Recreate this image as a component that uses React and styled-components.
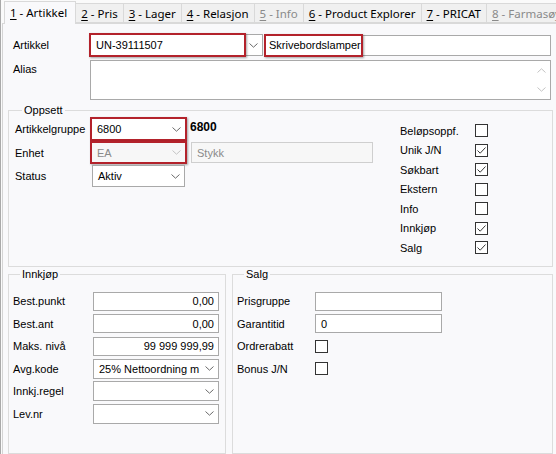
import React from 'react';
import styled, { createGlobalStyle } from 'styled-components';

const Global = createGlobalStyle`
  html, body { margin: 0; padding: 0; background: #f9f9fb; }
  body { font-family: "Liberation Sans", Arial, sans-serif; font-size: 11px; color: #000; }
  * { box-sizing: border-box; }
`;

const Window = styled.div`
  width: 556px;
  height: 454px;
  overflow: hidden;
  display: flex;
  flex-direction: column;
  background: #fafafa;
  border-left: 1px solid #a9a9a9;
`;

const TabStrip = styled.div`
  display: flex;
  align-items: flex-end;
  height: 23px;
  padding-left: 3px;
  flex-shrink: 0;
`;

const Tab = styled.div`
  position: relative;
  flex-shrink: 0;
  display: flex;
  align-items: center;
  white-space: nowrap;
  font-family: "Noto Sans", sans-serif;
  font-size: 11.5px;
  height: ${p => (p.$active ? 23 : 20)}px;
  padding: ${p => (p.$active ? '0 8px 2px 5px' : '0 5px 0 5px')};
  margin-bottom: ${p => (p.$active ? -1 : 0)}px;
  background: ${p => (p.$active ? '#f9f9fb' : '#f0f0f0')};
  border: 1px solid #d9d9d9;
  border-bottom: ${p => (p.$active ? 'none' : '1px solid #d9d9d9')};
  margin-left: ${p => (p.$first ? 0 : -1)}px;
  color: ${p => (p.$disabled ? '#8a8a8a' : '#000')};
  z-index: ${p => (p.$active ? 1 : 0)};
  u { text-decoration-thickness: 1px; text-underline-offset: 2px; }
`;

const Page = styled.div`
  flex: 1;
  border-top: 1px solid #d9d9d9;
  border-left: 1px solid #d4d4d4;
  margin-left: 1px;
  background: #f9f9fb;
  padding: 10px 3px 0 5px;
  display: flex;
  flex-direction: column;
`;

const TopRow = styled.div`
  display: flex;
  align-items: ${p => (p.$top ? 'flex-start' : 'center')};
  height: ${p => p.$h}px;
  margin-top: ${p => p.$mt || 0}px;
  padding-left: 5px;
  padding-right: 2px;
  gap: 2px;
`;

const Label = styled.div`
  width: ${p => p.$w}px;
  flex-shrink: 0;
  white-space: nowrap;
  padding-top: ${p => p.$pt || 0}px;
`;

const FieldBox = styled.div`
  position: relative;
  display: flex;
  align-items: center;
  height: ${p => p.$h || 20}px;
  width: ${p => (p.$w ? `${p.$w}px` : 'auto')};
  flex: ${p => (p.$w ? '0 0 auto' : '1 1 0')};
  background: ${p => (p.$disabled ? '#f7f7f7' : '#fff')};
  border: 1px solid ${p => (p.$disabled ? '#cfcfcf' : '#a9a9a9')};
  color: ${p => (p.$disabled ? '#8a8a8a' : '#000')};
  font-size: 11px;
  margin-left: ${p => p.$ml || 0}px;
`;

const FieldText = styled.div`
  flex: 1;
  overflow: hidden;
  white-space: nowrap;
  padding: 0 ${p => (p.$right ? 4 : 3)}px 0 ${p => p.$pl || 5}px;
  text-align: ${p => (p.$right ? 'right' : 'left')};
`;

const ArrowCell = styled.div`
  width: 18px;
  height: 100%;
  display: flex;
  align-items: center;
  justify-content: center;
  flex-shrink: 0;
  border-left: ${p => (p.$split ? '1px solid #c8c8c8' : 'none')};
`;

const Mark = styled.span`
  position: absolute;
  left: -2px;
  top: -2px;
  bottom: -2px;
  width: ${p => (p.$w ? `${p.$w}px` : 'calc(100% + 4px)')};
  border: 2px solid #b3222b;
  box-shadow: 1px 1px 2px rgba(0, 0, 0, 0.35);
  pointer-events: none;
`;

const ScrollCol = styled.div`
  width: 17px;
  align-self: stretch;
  display: flex;
  flex-direction: column;
  justify-content: space-between;
  align-items: center;
  padding: 7px 0 7px;
`;

const Chevron = ({ up, light }) => (
  <svg width="9" height="5" viewBox="0 0 9 5">
    <polyline
      points={up ? '0.5,4.5 4.5,0.8 8.5,4.5' : '0.5,0.5 4.5,4.2 8.5,0.5'}
      fill="none"
      stroke={light ? '#c4c4c4' : '#6a6a6a'}
      strokeWidth="1"
    />
  </svg>
);

const Combo = ({ w, h, value, disabled, split, mark, markW }) => (
  <FieldBox $w={w} $h={h} $disabled={disabled}>
    <FieldText>{value}</FieldText>
    <ArrowCell $split={split}>
      <Chevron light={disabled} />
    </ArrowCell>
    {mark && <Mark $w={markW} />}
  </FieldBox>
);

const Group = styled.fieldset`
  margin: ${p => p.$m || '0'};
  padding: ${p => p.$pad};
  border: 1px solid #dcdcdc;
  height: ${p => p.$h}px;
  width: ${p => (p.$w ? `${p.$w}px` : 'auto')};
  flex: ${p => (p.$w ? '0 0 auto' : '1 1 0')};
  min-width: 0;
  border-radius: 0;
`;

const Legend = styled.legend`
  margin-left: 7px;
  padding: 0 2px;
  line-height: 13px;
  font-size: 11px;
`;

const OppsettBody = styled.div`
  display: flex;
`;

const LeftCol = styled.div`
  width: 358px;
  display: flex;
  flex-direction: column;
  gap: 2px;
`;

const FormRow = styled.div`
  display: flex;
  align-items: center;
  height: ${p => p.$h}px;
`;

const Bold = styled.div`
  align-self: flex-start;
  font-weight: bold;
  font-size: 12px;
  margin-left: 4px;
  padding-top: 2px;
`;

const CheckCol = styled.div`
  margin-left: 27px;
  padding-top: 3px;
  display: grid;
  grid-auto-rows: 19.5px;
`;

const CheckRow = styled.div`
  display: flex;
  align-items: center;
`;

const Box = styled.div`
  width: 13px;
  height: 13px;
  border: 1px solid #333;
  background: #fff;
  flex-shrink: 0;
  display: flex;
  align-items: center;
  justify-content: center;
`;

const Check = ({ on }) => (
  <Box>
    {on && (
      <svg width="11" height="11" viewBox="0 0 11 11">
        <polyline points="1.5,5.5 4.2,8.2 9.5,2.5" fill="none" stroke="#3a3a3a" strokeWidth="1" />
      </svg>
    )}
  </Box>
);

const BottomRow = styled.div`
  display: flex;
  gap: 6px;
  margin-top: 1px;
`;

const FormGrid = styled.div`
  display: grid;
  grid-template-columns: ${p => p.$lw}px ${p => p.$fw}px;
  grid-auto-rows: 20px;
  row-gap: 2.6px;
  align-items: center;
`;

const checks = [
  ['Beløpsoppf.', false],
  ['Unik J/N', true],
  ['Søkbart', true],
  ['Ekstern', false],
  ['Info', false],
  ['Innkjøp', true],
  ['Salg', true],
];

const tabs = [
  ['1', 'Artikkel', false],
  ['2', 'Pris', false],
  ['3', 'Lager', false],
  ['4', 'Relasjon', false],
  ['5', 'Info', true],
  ['6', 'Product Explorer', false],
  ['7', 'PRICAT', false],
  ['8', 'Farmasøytisk', true],
];

export default function App() {
  return (
    <>
      <Global />
      <Window>
        <TabStrip>
          {tabs.map(([k, t, dis], i) => (
            <Tab key={k} $active={i === 0} $first={i === 0} $disabled={dis}>
              <span>
                <u>{k}</u>
                {` - ${t}`}
              </span>
            </Tab>
          ))}
        </TabStrip>
        <Page>
          <TopRow $h={22}>
            <Label $w={75}>Artikkel</Label>
            <Combo w={173} h={22} value="UN-39111507" split mark markW={157} />
            <FieldBox $h={21}>
              <FieldText $pl={3}>Skrivebordslamper</FieldText>
              <Mark $w={99} />
            </FieldBox>
          </TopRow>
          <TopRow $h={40} $mt={4} $top>
            <Label $w={75} $pt={3}>Alias</Label>
            <FieldBox $h={40}>
              <FieldText />
              <ScrollCol>
                <Chevron up light />
                <Chevron light />
              </ScrollCol>
            </FieldBox>
          </TopRow>

          <Group $m="4px 0 0 0" $h={160} $pad="1px 4px 0 6px">
            <Legend>Oppsett</Legend>
            <OppsettBody>
              <LeftCol>
                <FormRow $h={22}>
                  <Label $w={76}>Artikkelgruppe</Label>
                  <Combo w={95} h={22} value="6800" mark />
                  <Bold>6800</Bold>
                </FormRow>
                <FormRow $h={21}>
                  <Label $w={76}>Enhet</Label>
                  <Combo w={95} h={21} value="EA" disabled mark />
                  <FieldBox $h={21} $disabled $ml={5}>
                    <FieldText $pl={5}>Stykk</FieldText>
                  </FieldBox>
                </FormRow>
                <FormRow $h={22}>
                  <Label $w={77}>Status</Label>
                  <Combo w={93} h={22} value="Aktiv" />
                </FormRow>
              </LeftCol>
              <CheckCol>
                {checks.map(([l, on]) => (
                  <CheckRow key={l}>
                    <Label $w={75}>{l}</Label>
                    <Check on={on} />
                  </CheckRow>
                ))}
              </CheckCol>
            </OppsettBody>
          </Group>

          <BottomRow>
            <Group $w={218} $h={186} $pad="10px 6px 0 4px">
              <Legend>Innkjøp</Legend>
              <FormGrid $lw={80} $fw={126}>
                <Label>Best.punkt</Label>
                <FieldBox $h={19}><FieldText $right>0,00</FieldText></FieldBox>
                <Label>Best.ant</Label>
                <FieldBox $h={19}><FieldText $right>0,00</FieldText></FieldBox>
                <Label>Maks. nivå</Label>
                <FieldBox $h={19}><FieldText $right>99 999 999,99</FieldText></FieldBox>
                <Label>Avg.kode</Label>
                <Combo h={20} value="25% Nettoordning m" />
                <Label>Innkj.regel</Label>
                <Combo h={20} value="" />
                <Label>Lev.nr</Label>
                <Combo h={20} value="" />
              </FormGrid>
            </Group>
            <Group $h={186} $pad="10px 6px 0 4px">
              <Legend>Salg</Legend>
              <FormGrid $lw={78} $fw={127}>
                <Label>Prisgruppe</Label>
                <FieldBox $h={19}><FieldText /></FieldBox>
                <Label>Garantitid</Label>
                <FieldBox $h={19}><FieldText>0</FieldText></FieldBox>
                <Label>Ordrerabatt</Label>
                <Check />
                <Label>Bonus J/N</Label>
                <Check />
              </FormGrid>
            </Group>
          </BottomRow>
        </Page>
      </Window>
    </>
  );
}
